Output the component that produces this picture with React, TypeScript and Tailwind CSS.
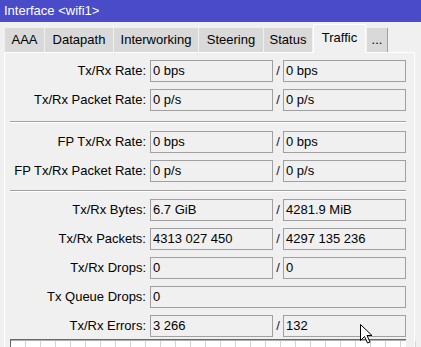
import React from "react";

const font = { fontFamily: '"Liberation Sans", Arial, sans-serif' };

type Row =
  | { kind: "pair"; label: string; a: string; b: string }
  | { kind: "single"; label: string; a: string };

const sec1: Row[] = [
  { kind: "pair", label: "Tx/Rx Rate:", a: "0 bps", b: "0 bps" },
  { kind: "pair", label: "Tx/Rx Packet Rate:", a: "0 p/s", b: "0 p/s" },
];
const sec2: Row[] = [
  { kind: "pair", label: "FP Tx/Rx Rate:", a: "0 bps", b: "0 bps" },
  { kind: "pair", label: "FP Tx/Rx Packet Rate:", a: "0 p/s", b: "0 p/s" },
];
const sec3: Row[] = [
  { kind: "pair", label: "Tx/Rx Bytes:", a: "6.7 GiB", b: "4281.9 MiB" },
  { kind: "pair", label: "Tx/Rx Packets:", a: "4313 027 450", b: "4297 135 236" },
  { kind: "pair", label: "Tx/Rx Drops:", a: "0", b: "0" },
  { kind: "single", label: "Tx Queue Drops:", a: "0" },
  { kind: "pair", label: "Tx/Rx Errors:", a: "3 266", b: "132" },
];

function Field({ value, w }: { value: string; w: string }) {
  return (
    <div
      className={`${w} h-[22px] border border-[#a0a0a0] bg-[#f0f0f0] pl-[2px] flex items-center text-[13px] text-black whitespace-nowrap overflow-hidden`}
    >
      {value}
    </div>
  );
}

function RowView({ r }: { r: Row }) {
  return (
    <div className="flex items-center h-[22px]">
      <div className="w-[136px] pr-[0px] text-right text-[13px] text-black whitespace-nowrap">
        {r.label}
      </div>
      <div className="w-[4px]" />
      {r.kind === "pair" ? (
        <>
          <Field value={r.a} w="w-[123px]" />
          <div className="w-[10px] text-center text-[13px] text-[#101040]">/</div>
          <Field value={r.b} w="w-[123px]" />
        </>
      ) : (
        <Field value={r.a} w="w-[256px]" />
      )}
    </div>
  );
}

function Section({ rows }: { rows: Row[] }) {
  return (
    <div className="flex flex-col gap-[7px]">
      {rows.map((r) => (
        <RowView key={r.label} r={r} />
      ))}
    </div>
  );
}

function Separator({ mt, mb }: { mt: string; mb: string }) {
  return (
    <div className={`${mt} ${mb} w-[396px] h-[2px] border-t border-[#a0a0a0] border-b border-b-white`} />
  );
}

const tabs: { label: string; w: string; active?: boolean }[] = [
  { label: "AAA", w: "w-[39px]" },
  { label: "Datapath", w: "w-[68px]" },
  { label: "Interworking", w: "w-[84px]" },
  { label: "Steering", w: "w-[64px]" },
  { label: "Status", w: "w-[48px]" },
  { label: "Traffic", w: "w-[53px]", active: true },
  { label: "...", w: "w-[21px]" },
];

export default function App() {
  return (
    <div className="w-[421px] h-[347px] overflow-hidden bg-[#f0f0f0] relative" style={font}>
      <div className="h-[22px] bg-[#4a4bc9] text-white text-[13px] pl-[4px] flex items-center">
        Interface &lt;wifi1&gt;
      </div>
      <div className="h-[30px] flex items-end pl-[5px] gap-[1px] relative z-10">
        {tabs.map((t) =>
          t.active ? (
            <div
              key={t.label}
              className={`${t.w} h-[29px] -mb-[1px] bg-[#f0f0f0] border-t border-l border-r border-white flex items-center justify-center text-[13px] text-black pb-[3px]`}
            >
              {t.label}
            </div>
          ) : (
            <div
              key={t.label}
              className={`${t.w} h-[24px] bg-[#d9d9d9] flex items-center justify-center text-[13px] text-black ${
                t.label === "..." ? "border-r border-[#a0a0a0]" : ""
              }`}
            >
              {t.label}
            </div>
          )
        )}
      </div>
      <div className="ml-[4px] w-[411px] h-[300px] border-t border-l border-r border-white pl-[5px] pt-[7px]">
        <Section rows={sec1} />
        <Separator mt="mt-[10px]" mb="mb-[8px]" />
        <Section rows={sec2} />
        <Separator mt="mt-[8px]" mb="mb-[7px]" />
        <Section rows={sec3} />
        <div className="mt-[2px] w-[396px] border-t border-[#696969] border-l border-l-[#696969] bg-white">
          <div className="border-t border-[#b0b0b0] flex h-[20px]">
            {Array.from({ length: 27 }).map((_, i) => (
              <div key={i} className="w-[15px] shrink-0 h-full border-r border-[#d4d4d4]" />
            ))}
          </div>
        </div>
      </div>
      <svg
        className="absolute left-[360px] top-[324px]"
        width="13"
        height="20"
        viewBox="0 0 13 20"
      >
        <path
          d="M0.5 0.5 L0.5 16.5 L4.5 12.5 L7.5 19 L10 18 L7 11.5 L12 11.5 Z"
          fill="white"
          stroke="black"
          strokeWidth="1"
          strokeLinejoin="miter"
        />
      </svg>
    </div>
  );
}
